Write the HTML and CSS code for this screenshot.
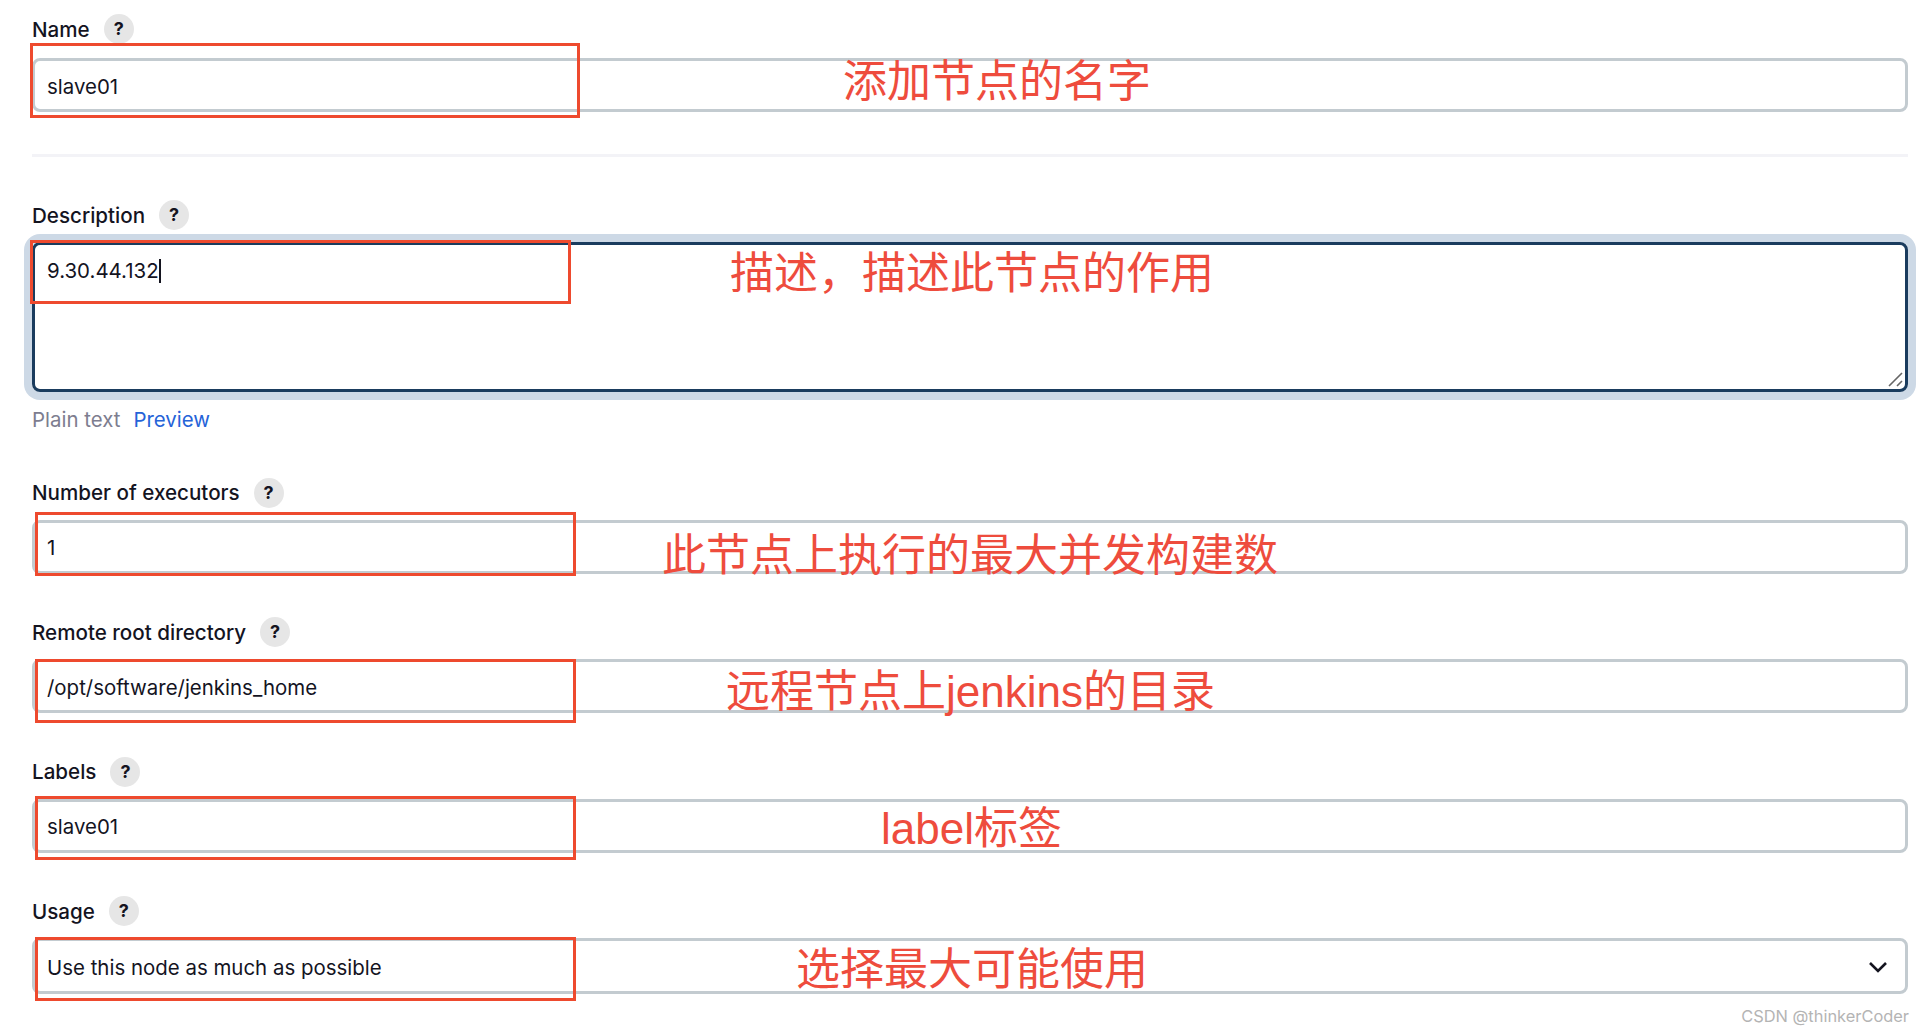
FILE: index.html
```html
<!DOCTYPE html>
<html lang="en">
<head>
	<meta charset="UTF-8">
	<title>Node configuration</title>
	<link rel="stylesheet" href="styles.css">
</head>
<body>
	<form class="node-form">
		<div class="field">
			<div class="label">Name <span class="help">?</span></div>
			<div class="input">slave01</div>
		</div>
		<div class="divider"></div>
		<div class="field">
			<div class="label">Description <span class="help">?</span></div>
			<div class="textarea">
				<span class="area-text">9.30.44.132</span><span class="caret"></span>
				<svg class="grip" width="15" height="15" viewBox="0 0 15 15">
					<path d="M1 14 L14 1 M9 14 L14 9" stroke="#666" stroke-width="1.6" fill="none"/>
				</svg>
			</div>
			<div class="format"><span class="plain">Plain text</span><a class="preview">Preview</a></div>
		</div>
		<div class="field">
			<div class="label">Number of executors <span class="help">?</span></div>
			<div class="input">1</div>
		</div>
		<div class="field">
			<div class="label">Remote root directory <span class="help">?</span></div>
			<div class="input">/opt/software/jenkins_home</div>
		</div>
		<div class="field">
			<div class="label">Labels <span class="help">?</span></div>
			<div class="input">slave01</div>
		</div>
		<div class="field">
			<div class="label">Usage <span class="help">?</span></div>
			<div class="input select">
				<span>Use this node as much as possible</span>
				<svg class="chevron" width="20" height="12" viewBox="0 0 20 12">
					<path d="M2 2 L10 10 L18 2" stroke="#14141f" stroke-width="2.6" fill="none"/>
				</svg>
			</div>
		</div>
	</form>

	<!-- red marks drawn on top of the screenshot -->
	<div class="box box1"></div>
	<div class="box box2"></div>
	<div class="box box3"></div>
	<div class="box box4"></div>
	<div class="box box5"></div>
	<div class="box box6"></div>
	<div class="note note1">添加节点的名字</div>
	<div class="note note2">描述，描述此节点的作用</div>
	<div class="note note3">此节点上执行的最大并发构建数</div>
	<div class="note note4">远程节点上jenkins的目录</div>
	<div class="note note5">label标签</div>
	<div class="note note6">选择最大可能使用</div>
	<div class="mark">CSDN @thinkerCoder</div>
</body>
</html>
```

FILE: styles.css
```css
*{margin:0; padding:0; box-sizing:border-box;}
html,body{height:100%; overflow:hidden;}
body{
	position:relative;
	background:#fff;
	color:#14141f;
	font-family:Inter,"Noto Sans CJK SC",sans-serif;
	font-size:20.45px;
}
.node-form{
	padding:11px 16px 0 32px;
}
.field{margin-bottom:40.5px;}
.field:first-child{margin-bottom:42px;}
.label{
	display:flex;
	align-items:center;
	gap:14px;
	height:36px;
	margin-bottom:9px;
	font-size:20.6px;
	font-weight:500;
}
.field:first-child .label{margin-bottom:11px;}
.help{
	display:block;
	width:30px;
	height:30px;
	border-radius:50%;
	background:#e6e6e6;
	font-size:18px;
	font-weight:700;
	line-height:30px;
	text-align:center;
}
.input{
	display:flex;
	align-items:center;
	height:54px;
	padding:2px 12px 0;
	border:3px solid #c3cbd0;
	border-radius:8px;
	background:#fff;
}
.select{
	justify-content:space-between;
	height:56px;
}
.chevron{margin-right:5px;}
.divider{
	height:3px;
	margin-bottom:40px;
	background:#f3f3f7;
}
.textarea{
	position:relative;
	height:150px;
	padding:13px 12px;
	border:3px solid #1a3c5e;
	border-radius:8px;
	box-shadow:0 0 0 8px #cdd9e6;
}
.caret{
	display:inline-block;
	width:2px;
	height:24px;
	background:#14141f;
	vertical-align:-5px;
}
.grip{
	position:absolute;
	right:2px;
	bottom:2px;
}
.format{
	display:flex;
	gap:13px;
	height:28px;
	margin:14px 0 3px;
	line-height:28px;
}
.plain{color:#7d7d8f;}
.preview{color:#2563d8;}

/* annotations */
.box{
	position:absolute;
	border:3px solid #ee4a2e;
}
.box1{left:30px; top:43px; width:550px; height:75px;}
.box2{left:30px; top:240px; width:541px; height:64px;}
.box3{left:35px; top:512px; width:541px; height:64px;}
.box4{left:35px; top:659px; width:541px; height:64px;}
.box5{left:35px; top:796px; width:541px; height:64px;}
.box6{left:35px; top:937px; width:541px; height:64px;}
.note{
	position:absolute;
	color:#ee4c3d;
	font-family:"Liberation Sans","Noto Sans CJK SC",sans-serif;
	font-size:44px;
	line-height:60px;
	white-space:nowrap;
}
.note1{left:843px; top:52px;}
.note2{left:730px; top:244px;}
.note3{left:662px; top:526px;}
.note4{left:726px; top:662px;}
.note5{left:881px; top:799px;}
.note6{left:796px; top:940px;}
.mark{
	position:absolute;
	right:15px;
	top:1005px;
	color:#b4b4b4;
	font-size:16.4px;
	line-height:22px;
}
```
